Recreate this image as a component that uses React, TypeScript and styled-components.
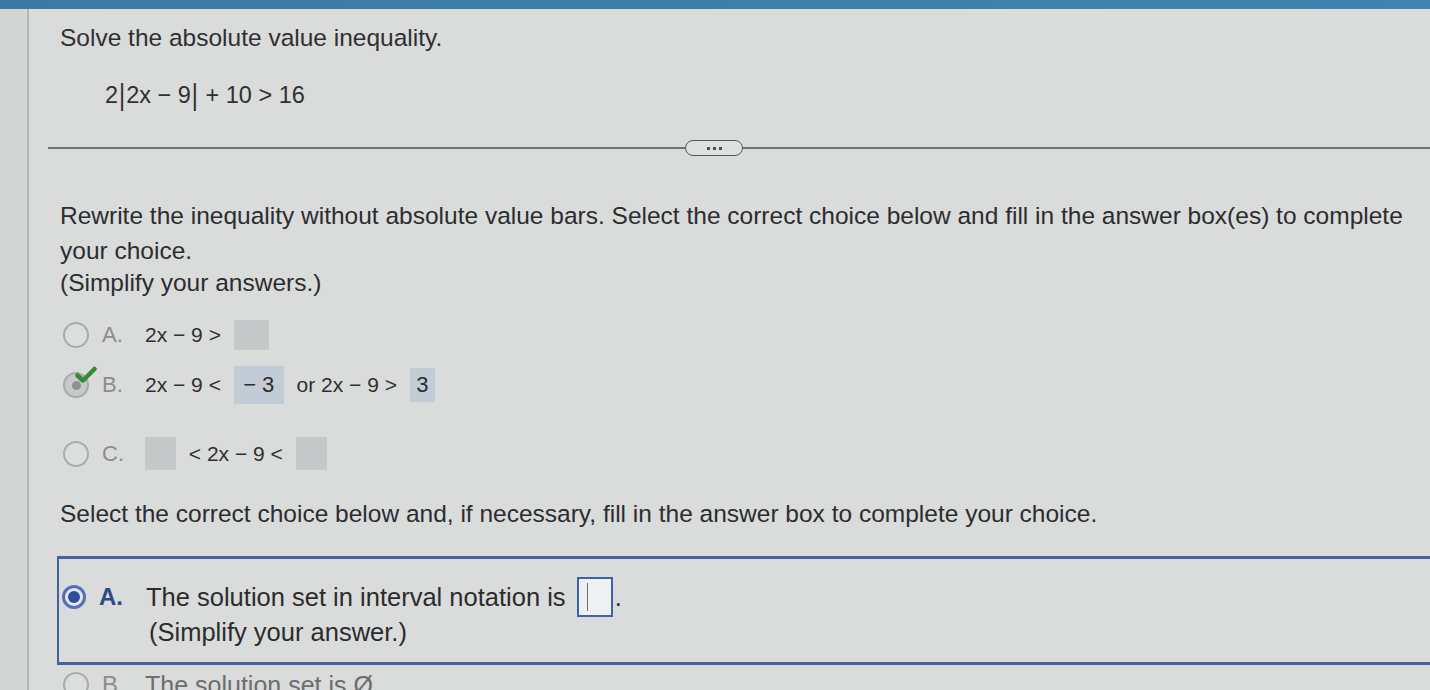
import React from 'react';
import styled, { createGlobalStyle } from 'styled-components';

const GlobalStyle = createGlobalStyle`
  html, body {
    margin: 0;
    padding: 0;
    background: #dadbdb;
    overflow: hidden;
  }
  body {
    font-family: 'Liberation Sans', Arial, sans-serif;
    color: #2e2f30;
  }
`;

const Choice: React.FC<{
  label: string;
  top: number;
  checked?: boolean;
  children: React.ReactNode;
}> = ({ label, top, checked, children }) => (
  <OptionRow $top={top}>
    <RadioWrap>
      <Radio $done={checked} />
      {checked && (
        <CheckMark viewBox="0 0 22 18">
          <path d="M2.5 9.5 L8 14.5 L19.5 3" fill="none" stroke="#378a34" strokeWidth="4.5" strokeLinecap="round" strokeLinejoin="round" />
        </CheckMark>
      )}
    </RadioWrap>
    <OptionLabel>{label}</OptionLabel>
    <MathLine>{children}</MathLine>
  </OptionRow>
);

export default function App() {
  return (
    <>
      <GlobalStyle />
      <TopBar />
      <Page>
        <Gutter />
        <Content>
          <Title>Solve the absolute value inequality.</Title>
          <Equation>
            2<Bar>|</Bar>2x − 9<Bar>|</Bar> + 10 &gt; 16
          </Equation>

          <Divider>
            <DividerLine $w={637} />
            <MorePill>
              <Dot />
              <Dot />
              <Dot />
            </MorePill>
            <DividerLine />
          </Divider>

          <Prompt>
            Rewrite the inequality without absolute value bars. Select the correct choice below and fill in the
            answer box(es) to complete your choice.
          </Prompt>
          <PromptNote>(Simplify your answers.)</PromptNote>

          <Choice label="A." top={22}>
            2x − 9 &gt; <Blank $w={35} $h={30} />
          </Choice>
          <Choice label="B." top={16} checked>
            2x − 9 &lt; <Filled $w={50} $h={38}>− 3</Filled> or 2x − 9 &gt; <Filled $w={25} $h={34}>3</Filled>
          </Choice>
          <Choice label="C." top={33}>
            <Blank $w={31} $h={33} /> &lt; 2x − 9 &lt; <Blank $w={31} $h={33} />
          </Choice>

          <Prompt $top={26}>
            Select the correct choice below and, if necessary, fill in the answer box to complete your choice.
          </Prompt>

          <AnswerBox>
            <AnswerRow>
              <SelectedRadio />
              <AnswerLabel>A.</AnswerLabel>
              <AnswerText>
                The solution set in interval notation is <InputBox><Caret /></InputBox>.
              </AnswerText>
            </AnswerRow>
            <AnswerNote>(Simplify your answer.)</AnswerNote>
          </AnswerBox>

          <NextRow>
            <Radio />
            <NextLabel>B.</NextLabel>
            <NextText>The solution set is Ø.</NextText>
          </NextRow>
        </Content>
      </Page>
    </>
  );
}

const TopBar = styled.div`
  height: 9px;
  background: linear-gradient(90deg, #3a7aa6, #3f84b0);
`;

const Page = styled.div`
  display: flex;
  height: 681px;
  background: #dadbdb;
`;

const Gutter = styled.div`
  width: 27px;
  flex: none;
  background: #d3d4d4;
  border-right: 2px solid #b5b6b6;
`;

const Content = styled.div`
  flex: 1;
  display: flex;
  flex-direction: column;
  padding: 17px 0 0 31px;
  min-width: 0;
`;

const Title = styled.div`
  font-size: 24.5px;
  line-height: 24px;
  color: #2f3031;
`;

const Equation = styled.div`
  margin: 33px 0 0 45px;
  font-size: 23.5px;
  line-height: 24px;
  color: #2f3031;
`;

const Bar = styled.span`
  display: inline-block;
  transform: scaleY(1.25);
  margin: 0 1px;
`;

const Divider = styled.div`
  display: flex;
  align-items: center;
  margin: 33px 0 0 -12px;
  height: 16px;
`;

const DividerLine = styled.div<{ $w?: number }>`
  height: 2px;
  background: #6f7172;
  ${({ $w }) => ($w ? `width: ${$w}px; flex: none;` : 'flex: 1;')}
`;

const MorePill = styled.div`
  width: 56px;
  height: 14px;
  flex: none;
  border: 1.5px solid #55585a;
  border-radius: 8px;
  display: flex;
  align-items: center;
  justify-content: center;
  gap: 3px;
  background: #dedfdf;
`;

const Dot = styled.span`
  width: 3px;
  height: 3px;
  background: #4a4c4e;
`;

const Prompt = styled.div<{ $top?: number }>`
  margin-top: ${({ $top }) => $top ?? 42}px;
  max-width: 1362px;
  font-size: 24.5px;
  line-height: 35px;
  color: #2c2d2e;
`;

const PromptNote = styled.div`
  font-size: 24.5px;
  line-height: 30px;
  color: #2c2d2e;
`;

const OptionRow = styled.div<{ $top: number }>`
  display: flex;
  align-items: center;
  height: 40px;
  margin-top: ${({ $top }) => $top}px;
`;

const RadioWrap = styled.div`
  position: relative;
  margin-left: 3px;
  display: flex;
`;

const Radio = styled.span<{ $done?: boolean }>`
  width: 22px;
  height: 22px;
  border: 2px solid #a9abac;
  border-radius: 50%;
  background: #dcdddd;
  flex: none;
  display: flex;
  align-items: center;
  justify-content: center;
  ${({ $done }) =>
    $done &&
    `
    background: #c8c9ca;
    &::after {
      content: '';
      width: 9px;
      height: 9px;
      border-radius: 50%;
      background: #8e9091;
    }
  `}
`;

const CheckMark = styled.svg`
  position: absolute;
  left: 12px;
  top: -6px;
  width: 22px;
  height: 18px;
`;

const OptionLabel = styled.span`
  width: 43px;
  margin-left: 13px;
  font-size: 22px;
  color: #8b8d8e;
`;

const MathLine = styled.div`
  display: flex;
  align-items: center;
  gap: 7px;
  font-size: 21px;
  color: #2f3031;
  white-space: pre;
`;

const Blank = styled.span<{ $w: number; $h: number }>`
  display: inline-block;
  width: ${({ $w }) => $w}px;
  height: ${({ $h }) => $h}px;
  background: #c6c7c8;
`;

const Filled = styled.span<{ $w: number; $h: number }>`
  display: inline-flex;
  align-items: center;
  justify-content: center;
  width: ${({ $w }) => $w}px;
  height: ${({ $h }) => $h}px;
  background: #c2ccd7;
  font-size: 22px;
  color: #2c2d2e;
`;

const AnswerBox = styled.div`
  margin: 25px -10px 0 -3px;
  border: 3px solid #41639f;
  border-right: none;
  border-left-width: 2px;
  padding: 19px 0 14px 3px;
`;

const AnswerRow = styled.div`
  display: flex;
  align-items: center;
  height: 38px;
`;

const SelectedRadio = styled.span`
  width: 18px;
  height: 18px;
  border: 3px solid #5570b8;
  border-radius: 50%;
  background: #e3e6ef;
  display: flex;
  align-items: center;
  justify-content: center;
  flex: none;
  &::after {
    content: '';
    width: 12px;
    height: 12px;
    border-radius: 50%;
    background: #2f4f9a;
  }
`;

const AnswerLabel = styled.span`
  width: 47px;
  margin-left: 13px;
  font-size: 24px;
  font-weight: bold;
  color: #2c4a8a;
`;

const AnswerText = styled.span`
  display: flex;
  align-items: center;
  font-size: 25.5px;
  color: #2b2c2d;
  white-space: pre;
`;

const InputBox = styled.span`
  display: inline-flex;
  width: 36px;
  height: 40px;
  margin: 0 2px 0 4px;
  border: 2px solid #3f62a8;
  background: #eef0f3;
  padding-left: 8px;
  box-sizing: border-box;
  align-items: center;
`;

const Caret = styled.span`
  width: 1px;
  height: 28px;
  background: #6b6d70;
`;

const AnswerNote = styled.div`
  margin-left: 87px;
  font-size: 25.5px;
  line-height: 32px;
  color: #2b2c2d;
`;

const NextRow = styled.div`
  display: flex;
  align-items: center;
  height: 24px;
  margin: 8px 0 0 3px;
`;

const NextLabel = styled.span`
  width: 43px;
  margin-left: 13px;
  font-size: 24px;
  color: #8b8d8e;
`;

const NextText = styled.span`
  font-size: 25px;
  color: #6b6d6e;
`;
